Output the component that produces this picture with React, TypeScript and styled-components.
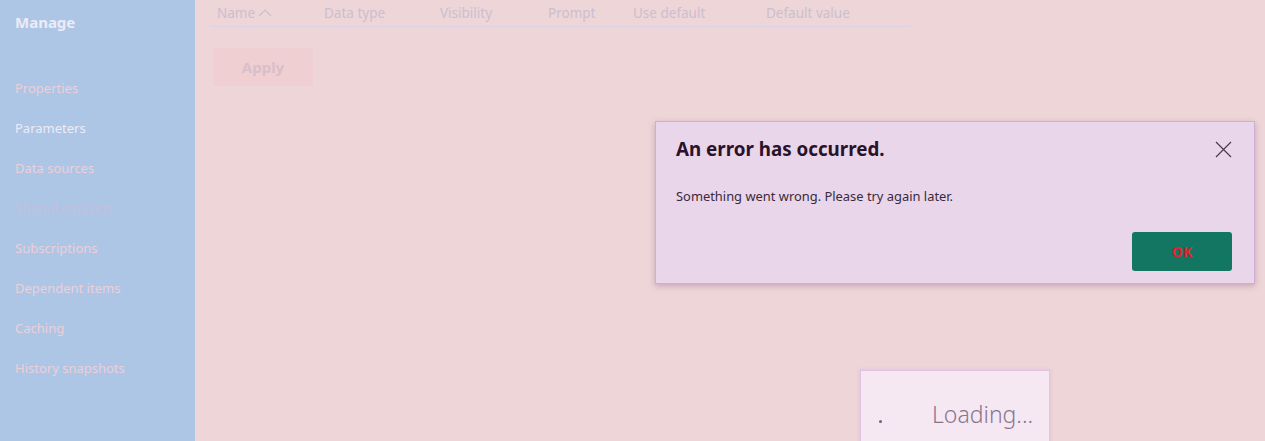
import React from 'react';
import styled, { createGlobalStyle } from 'styled-components';

const GlobalStyle = createGlobalStyle`
	html, body {
		margin: 0;
		padding: 0;
		height: 100%;
	}
	body {
		font-family: "Noto Sans", "Open Sans", sans-serif;
		background: #eed5d8;
		overflow: hidden;
	}
	#root {
		height: 100%;
	}
`;

type NavState = 'normal' | 'active' | 'disabled'

const navItems: { label: string, state: NavState }[] = [
	{ label: 'Properties', state: 'normal' },
	{ label: 'Parameters', state: 'active' },
	{ label: 'Data sources', state: 'normal' },
	{ label: 'Shared datasets', state: 'disabled' },
	{ label: 'Subscriptions', state: 'normal' },
	{ label: 'Dependent items', state: 'normal' },
	{ label: 'Caching', state: 'normal' },
	{ label: 'History snapshots', state: 'normal' }
];

const columns: { label: string, width: number }[] = [
	{ label: 'Name', width: 107 },
	{ label: 'Data type', width: 116 },
	{ label: 'Visibility', width: 108 },
	{ label: 'Prompt', width: 85 },
	{ label: 'Use default', width: 133 },
	{ label: 'Default value', width: 150 }
];

const navColors = {
	normal: '#eccfd8',
	active: '#eeeaf6',
	disabled: '#c3bfe0'
};

const Page = styled.div`
	position: relative;
	display: flex;
	width: 1265px;
	height: 441px;
	overflow: hidden;
`;

const Sidebar = styled.nav`
	width: 195px;
	flex-shrink: 0;
	background: #adc6e6;
	padding: 12px 15px;
	box-sizing: border-box;
`;

const SidebarTitle = styled.div`
	font-size: 15px;
	font-weight: 700;
	color: #eeeaf6;
	line-height: 20px;
	margin-bottom: 46px;
`;

const NavList = styled.ul`
	list-style: none;
	margin: 0;
	padding: 0;
	display: flex;
	flex-direction: column;
	gap: 20px;
`;

const NavItem = styled.li<{ $state: NavState }>`
	font-size: 13px;
	line-height: 20px;
	color: ${({ $state }) => navColors[$state]};
	white-space: nowrap;
`;

const Main = styled.main`
	flex: 1;
	padding: 4px 15px 0 15px;
`;

const HeaderRow = styled.div`
	display: flex;
	width: 700px;
	border-bottom: 1px solid #dcd2e6;
	padding: 0 0 4px 7px;
	box-sizing: border-box;
`;

const HeaderCell = styled.div<{ $width: number }>`
	width: ${({ $width }) => $width}px;
	flex-shrink: 0;
	font-size: 13.5px;
	line-height: 18px;
	color: #cbbfce;
	display: flex;
	align-items: center;
	gap: 3px;
	white-space: nowrap;
`;

const ApplyButton = styled.button`
	margin: 21px 0 0 3px;
	width: 100px;
	height: 38px;
	border: none;
	border-radius: 3px;
	background: #efcfd1;
	color: #d8bfca;
	font-family: inherit;
	font-size: 15px;
	font-weight: 700;
`;

const Dialog = styled.div`
	position: absolute;
	left: 655px;
	top: 121px;
	width: 600px;
	height: 163px;
	box-sizing: border-box;
	background: #e9d6ea;
	border: 1px solid #cfaed6;
	box-shadow: 0 2px 6px rgba(120, 80, 120, 0.35);
	padding: 12px 20px 0 20px;
	display: flex;
	flex-direction: column;
`;

const DialogHeader = styled.div`
	display: flex;
	justify-content: space-between;
	align-items: center;
`;

const DialogTitle = styled.h2`
	margin: 0;
	font-size: 18.8px;
	font-weight: 700;
	color: #2a1228;
	line-height: 30px;
`;

const CloseButton = styled.button`
	background: none;
	border: none;
	padding: 0;
	width: 20px;
	height: 20px;
	display: flex;
	align-items: center;
	justify-content: center;
	margin-right: 1px;
`;

const DialogBody = styled.p`
	margin: 23px 0 0 0;
	font-size: 12.9px;
	color: #3a2a3c;
	line-height: 18px;
`;

const DialogFooter = styled.div`
	display: flex;
	justify-content: flex-end;
	margin-top: 27px;
	padding-right: 2px;
`;

const OkButton = styled.button`
	width: 100px;
	height: 39px;
	border: none;
	border-radius: 3px;
	background: #137663;
	color: #e5202c;
	font-family: inherit;
	font-size: 14px;
	font-weight: 700;
`;

const LoadingBox = styled.div`
	position: absolute;
	left: 860px;
	top: 370px;
	width: 190px;
	height: 80px;
	box-sizing: border-box;
	background: #f5e8f3;
	border: 1px solid #e0c2e6;
	box-shadow: 0 0 4px rgba(200, 160, 200, 0.4);
	display: flex;
	align-items: center;
	padding: 8px 0 0 18px;
`;

const Dot = styled.span`
	width: 3px;
	height: 3px;
	border-radius: 50%;
	background: #6e6370;
	margin-top: 14px;
`;

const LoadingText = styled.span`
	margin-left: 50px;
	font-size: 23px;
	color: #8a7590;
	font-weight: 300;
`;

const SortIcon = () => (
	<svg width="14" height="10" viewBox="0 0 14 10">
		<path d="M1 8 L7 2 L13 8" fill="none" stroke="#cbbfce" strokeWidth="1.2" />
	</svg>
);

const CloseIcon = () => (
	<svg width="17" height="17" viewBox="0 0 17 17">
		<path d="M1 1 L16 16 M16 1 L1 16" fill="none" stroke="#4a3a4c" strokeWidth="1.2" />
	</svg>
);

export default function App() {
	return (
		<>
			<GlobalStyle />
			<Page>
				<Sidebar>
					<SidebarTitle>Manage</SidebarTitle>
					<NavList>
						{navItems.map(({ label, state }) => (
							<NavItem key={label} $state={state}>{label}</NavItem>
						))}
					</NavList>
				</Sidebar>
				<Main>
					<HeaderRow>
						{columns.map(({ label, width }, i) => (
							<HeaderCell key={label} $width={width}>
								{label}
								{i === 0 ? <SortIcon /> : null}
							</HeaderCell>
						))}
					</HeaderRow>
					<ApplyButton disabled>Apply</ApplyButton>
				</Main>
				<Dialog role="dialog">
					<DialogHeader>
						<DialogTitle>An error has occurred.</DialogTitle>
						<CloseButton aria-label="Close"><CloseIcon /></CloseButton>
					</DialogHeader>
					<DialogBody>Something went wrong. Please try again later.</DialogBody>
					<DialogFooter>
						<OkButton>OK</OkButton>
					</DialogFooter>
				</Dialog>
				<LoadingBox>
					<Dot />
					<LoadingText>Loading...</LoadingText>
				</LoadingBox>
			</Page>
		</>
	);
}
